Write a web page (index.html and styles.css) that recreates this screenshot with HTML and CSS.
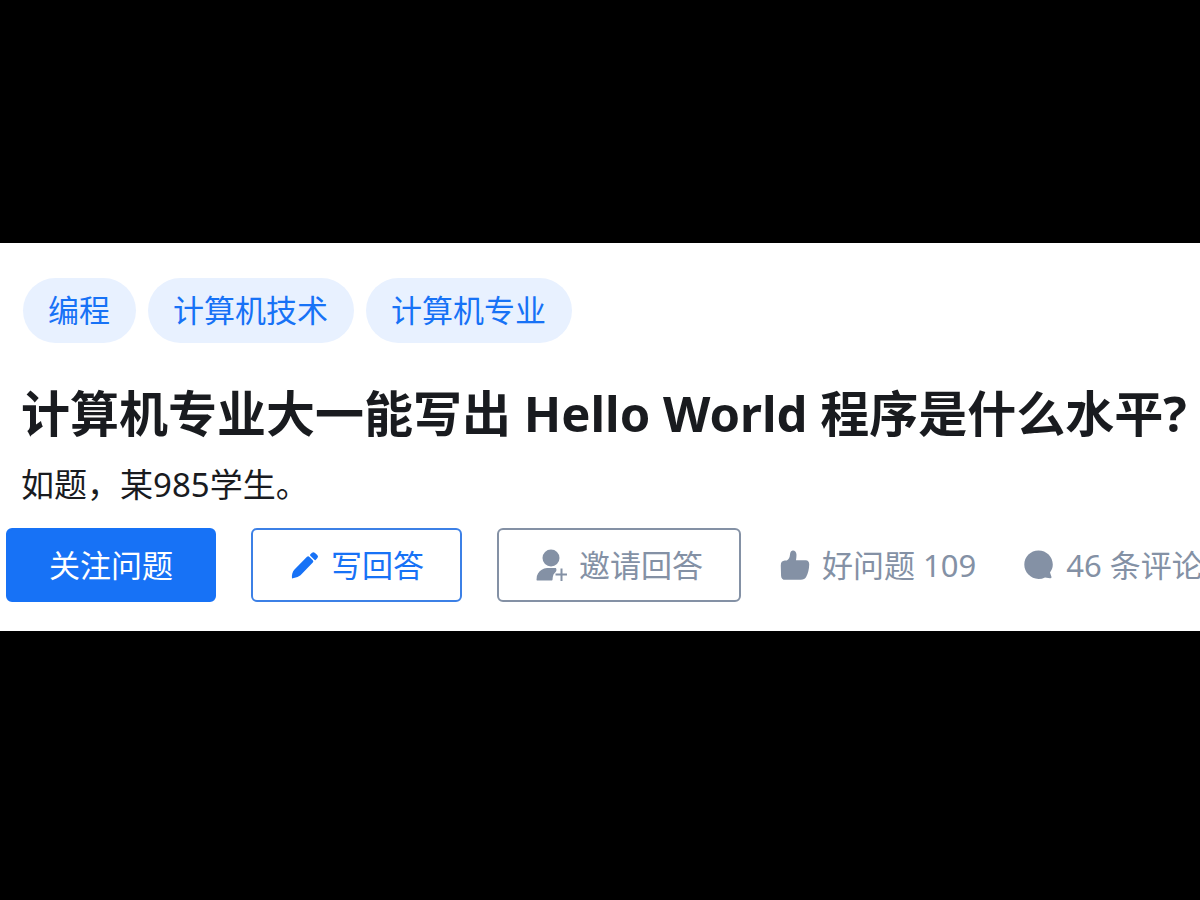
FILE: index.html
```
<!DOCTYPE html>
<html lang="zh-CN">
<head>
  <meta charset="UTF-8">
  <meta name="viewport" content="width=device-width, initial-scale=1">
  <title>计算机专业大一能写出 Hello World 程序是什么水平?</title>
  <link rel="stylesheet" href="styles.css">
</head>
<body>
  <main class="question">
    <div class="tags">
      <a class="tag" href="#">编程</a>
      <a class="tag" href="#">计算机技术</a>
      <a class="tag" href="#">计算机专业</a>
    </div>

    <h1 class="title">计算机专业大一能写出 Hello World 程序是什么水平?</h1>
    <p class="detail">如题，某985学生。</p>

    <div class="actions">
      <button type="button" class="btn btn-primary">关注问题</button>
      <button type="button" class="btn btn-blue">
        <svg class="icon" viewBox="0 0 30 30" aria-hidden="true">
          <path d="M3 28.500 C2.500 25 3.500 21.500 5.500 19.500 L18 6.800 Q19.300 5.800 20.500 7 L23.800 10.200 Q24.900 11.400 23.800 12.600 L11.500 25.300 Q8.500 28 3 28.500 Z"/>
          <path d="M21.200 4.500 L23 2.800 Q24.500 1.500 26 2.900 L28.300 5.100 Q29.700 6.700 28.400 8.100 L26.600 9.900 Q26 10.400 25.400 9.800 L21.300 5.700 Q20.700 5.100 21.200 4.500 Z"/>
        </svg>
        写回答
      </button>
      <button type="button" class="btn btn-grey">
        <svg class="icon icon-wide" viewBox="0 0 32 32" aria-hidden="true">
          <ellipse cx="16" cy="9" rx="8.500" ry="8.500"/>
          <path d="M1.500 31 Q1.200 27 3 24.500 Q6 19.500 12 19 L21 19 Q22 21 21 22.500 L18.500 25.500 Q17.500 28 17.500 31 Q17 31.500 16 31.500 L3 31.500 Q1.700 31.500 1.500 31 Z"/>
          <path d="M25.500 19.500 h2 v5 h4.500 v2 h-4.500 v5.500 h-2 v-5.500 h-5 v-2 h5 Z"/>
        </svg>
        邀请回答
      </button>
      <button type="button" class="link">
        <svg class="icon" viewBox="0 0 30 31" aria-hidden="true">
          <path d="M12 .8 C14 0 16.300 1.600 16.500 4.500 C16.600 7 16.300 9 16 10.500 L26 10.700 C28.500 10.800 29.800 12.500 29.700 15 C29.500 20 28.500 24.500 26.500 27.800 C25.300 29.700 23.800 30.600 21 30.800 L5 30.800 C2.200 30.800 .7 29.300 .6 26.500 L.3 16 C.3 12.800 1.700 11 4.500 10.900 L6.500 10.800 C8.600 10 9.500 8 9.800 5 C10 3 10.400 1.400 12 .8 Z"/>
        </svg>
        好问题 109
      </button>
      <button type="button" class="link">
        <svg class="icon" viewBox="0 0 30 30" aria-hidden="true">
          <path d="M14.500 .5 C22.500 .5 28.800 6.800 28.800 14.600 C28.800 18 27.500 20.500 26 22.500 L27.500 27 Q27.700 28.500 26 28.300 L21 27.400 Q18 28.900 14.500 28.900 C6.600 28.900 .3 22.500 .3 14.600 C.3 6.800 6.600 .5 14.500 .5 Z"/>
        </svg>
        46 条评论
      </button>
    </div>
  </main>
</body>
</html>
```
FILE: styles.css
```
body {
  margin: 0;
  padding-top: 243px;
  background: #000;
  font-family: "Noto Sans", "Noto Sans CJK SC", sans-serif;
  color: #191b1f;
}
.question {
  padding: 35px 0 29px;
  background: #fff;
  overflow: hidden;
  white-space: nowrap;
}
.tags {
  display: flex;
  gap: 12px;
  padding: 0 23px;
}
.tag {
  padding: 0 26px 0 25px;
  border-radius: 33px;
  background: #e8f1ff;
  color: #1772f6;
  font-size: 31px;
  line-height: 65px;
  text-decoration: none;
}
.title {
  margin: 38px 21px 18px;
  font-size: 49px;
  line-height: 64px;
}
.detail {
  margin: 0 21px 21px;
  font-size: 33px;
  line-height: 44px;
}
.actions {
  display: flex;
  align-items: center;
  padding-left: 6px;
}
button {
  display: flex;
  flex-shrink: 0;
  align-items: center;
  justify-content: center;
  box-sizing: border-box;
  font-family: inherit;
  font-size: 31px;
  line-height: 44px;
  cursor: pointer;
}
.btn {
  height: 74px;
  margin-right: 35px;
  padding: 0 36px;
  border: 2px solid;
  border-radius: 6px;
  background: #fff;
}
.btn-primary {
  padding: 0 41px;
  border-color: #1772f6;
  background: #1772f6;
  color: #fff;
}
.btn-blue {
  color: #1772f6;
  border-color: #3c80e6;
}
.btn-grey {
  color: #8491a5;
}
.link {
  margin: 0 48px 0 4px;
  padding: 0;
  border: 0;
  background: none;
  color: #8491a5;
}
.link + .link {
  margin: 0;
}
.icon {
  width: 30px;
  height: 30px;
  margin-right: 12px;
  fill: currentColor;
}
.icon-wide {
  width: 32px;
  height: 32px;
}
```
